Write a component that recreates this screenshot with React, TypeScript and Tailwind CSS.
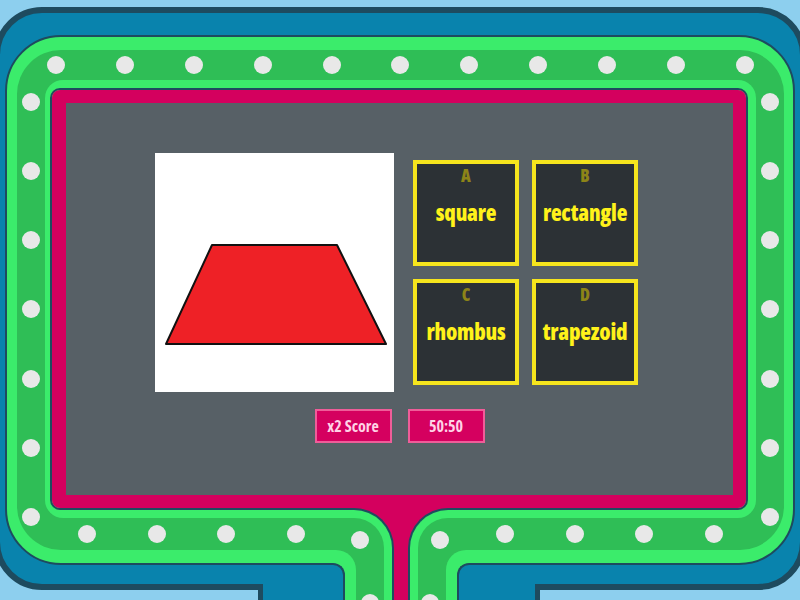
import React from "react";

const answers = [
  { letter: "A", text: "square" },
  { letter: "B", text: "rectangle" },
  { letter: "C", text: "rhombus" },
  { letter: "D", text: "trapezoid" },
];

function Dot() {
  return <span className="block h-[18px] w-[18px] shrink-0 rounded-full bg-[#e8e8e8]" />;
}

function Dots({ n }: { n: number }) {
  return (
    <>
      {Array.from({ length: n }, (_, i) => (
        <Dot key={i} />
      ))}
    </>
  );
}

function Card({ letter, text }: { letter: string; text: string }) {
  return (
    <div className="flex h-[106px] w-[106px] flex-col items-center border-4 border-[#f6e51d] bg-[#2c3135]">
      <span className="pt-[2px] text-[17px] font-extrabold leading-[20px] text-[#8d8418]">{letter}</span>
      <span className="flex flex-1 items-center pb-[23px] text-[22px] font-extrabold tracking-[-0.2px] text-[#fff21a]">
        {text}
      </span>
    </div>
  );
}

function Trapezoid() {
  return (
    <div className="h-[239px] w-[239px] shrink-0 bg-white">
      <svg width="239" height="239" viewBox="0 0 239 239">
        <polygon
          points="57,92 182,92 231,191 11,191"
          fill="#ee2126"
          stroke="#111"
          strokeWidth="2"
          strokeLinejoin="round"
        />
      </svg>
    </div>
  );
}

export default function App() {
  return (
    <div className="relative h-[600px] w-[800px] overflow-hidden bg-[#8dcfee] font-[family-name:'Liberation_Sans_Narrow','Open_Sans',sans-serif] font-stretch-[75%]">
      {/* outer blue frame */}
      <div className="-mx-[6px] mt-[7px] flex h-[583px] flex-col rounded-[48px] border-[6px] border-[#1e4b5f] bg-[#0983ad] px-[5px] pt-[22px] pb-[19px]">
        {/* green ring */}
        <div className="flex flex-1 flex-col rounded-[56px] border-2 border-[#1e4b5f] bg-[#3bec6b] pt-[13px] pr-[9px] pb-[13px] pl-[10px]">
          <div className="flex flex-1 rounded-[44px] bg-[#2fbe56]">
            <div className="flex w-[28px] flex-col items-center justify-between pt-[43px] pb-[24px]">
              <Dots n={7} />
            </div>
            <div className="flex flex-1 flex-col">
              <div className="flex h-[30px] items-center justify-between px-[2px]">
                <Dots n={11} />
              </div>
              <div className="flex-1 rounded-[18px] bg-[#3bec6b] pt-[8px] pr-[8px] pb-[8px] pl-[5px]">
                <div className="h-full rounded-[10px] border-2 border-[#1e4b5f]">
                  <div className="h-full rounded-[8px] bg-[#d4005e] pt-[13px] pr-[13px] pb-[13px] pl-[14px]">
                    <div className="flex h-full flex-col items-center bg-[#576066] pt-[50px]">
                      <div className="mr-[6px] flex items-center gap-[19px]">
                        <Trapezoid />
                        <div className="grid grid-cols-2 gap-x-[13px] gap-y-[13px]">
                          {answers.map((a) => (
                            <Card key={a.letter} letter={a.letter} text={a.text} />
                          ))}
                        </div>
                      </div>
                      <div className="mt-[17px] flex gap-[16px]">
                        <button className="h-[34px] w-[77px] border-2 border-[#ef5d99] bg-[#d5005f] text-[16px] font-bold text-[#ffd3e6]">
                          x2 Score
                        </button>
                        <button className="h-[34px] w-[77px] border-2 border-[#ef5d99] bg-[#d5005f] text-[16px] font-bold text-[#ffd3e6]">
                          50:50
                        </button>
                      </div>
                    </div>
                  </div>
                </div>
              </div>
              <div className="flex h-[32px] items-center justify-between px-[33px]">
                <Dots n={10} />
              </div>
            </div>
            <div className="flex w-[28px] flex-col items-center justify-between pt-[43px] pb-[24px]">
              <Dots n={7} />
            </div>
          </div>
        </div>
      </div>
      {/* blue stand under the frame */}
      <div className="mx-auto -mt-[6px] h-[16px] w-[282px] -translate-x-[1px] border-x-[5px] border-[#1e4b5f] bg-[#0983ad]" />

      {/* magenta stem going down through the bottom of the ring */}
      <div className="absolute top-[508px] left-[330px] flex h-[92px] w-[140px] gap-[14px] bg-[#d4005e]">
        <div className="relative h-full w-[64px] rounded-tr-[40px] border-t-2 border-r-2 border-[#1e4b5f] bg-[#3bec6b] pt-[8px] pr-[8px]">
          <div className="h-full rounded-tr-[30px] bg-[#2fbe56] pt-[32px] pr-[28px]">
            <div className="h-full rounded-tr-[20px] bg-[#3bec6b] pt-[13px] pr-[11px]">
              <div className="h-full rounded-tr-[12px] border-t-2 border-r-2 border-[#1e4b5f] bg-[#0983ad]" />
            </div>
          </div>
          <span className="absolute top-[21px] left-[21px] h-[18px] w-[18px] rounded-full bg-[#e8e8e8]" />
          <span className="absolute top-[84px] left-[31px] h-[18px] w-[18px] rounded-full bg-[#e8e8e8]" />
        </div>
        <div className="relative h-full w-[62px] rounded-tl-[40px] border-t-2 border-l-2 border-[#1e4b5f] bg-[#3bec6b] pt-[8px] pl-[8px]">
          <div className="h-full rounded-tl-[30px] bg-[#2fbe56] pt-[32px] pl-[28px]">
            <div className="h-full rounded-tl-[20px] bg-[#3bec6b] pt-[13px] pl-[11px]">
              <div className="h-full rounded-tl-[12px] border-t-2 border-l-2 border-[#1e4b5f] bg-[#0983ad]" />
            </div>
          </div>
          <span className="absolute top-[21px] left-[21px] h-[18px] w-[18px] rounded-full bg-[#e8e8e8]" />
          <span className="absolute top-[84px] left-[11px] h-[18px] w-[18px] rounded-full bg-[#e8e8e8]" />
        </div>
      </div>
    </div>
  );
}
